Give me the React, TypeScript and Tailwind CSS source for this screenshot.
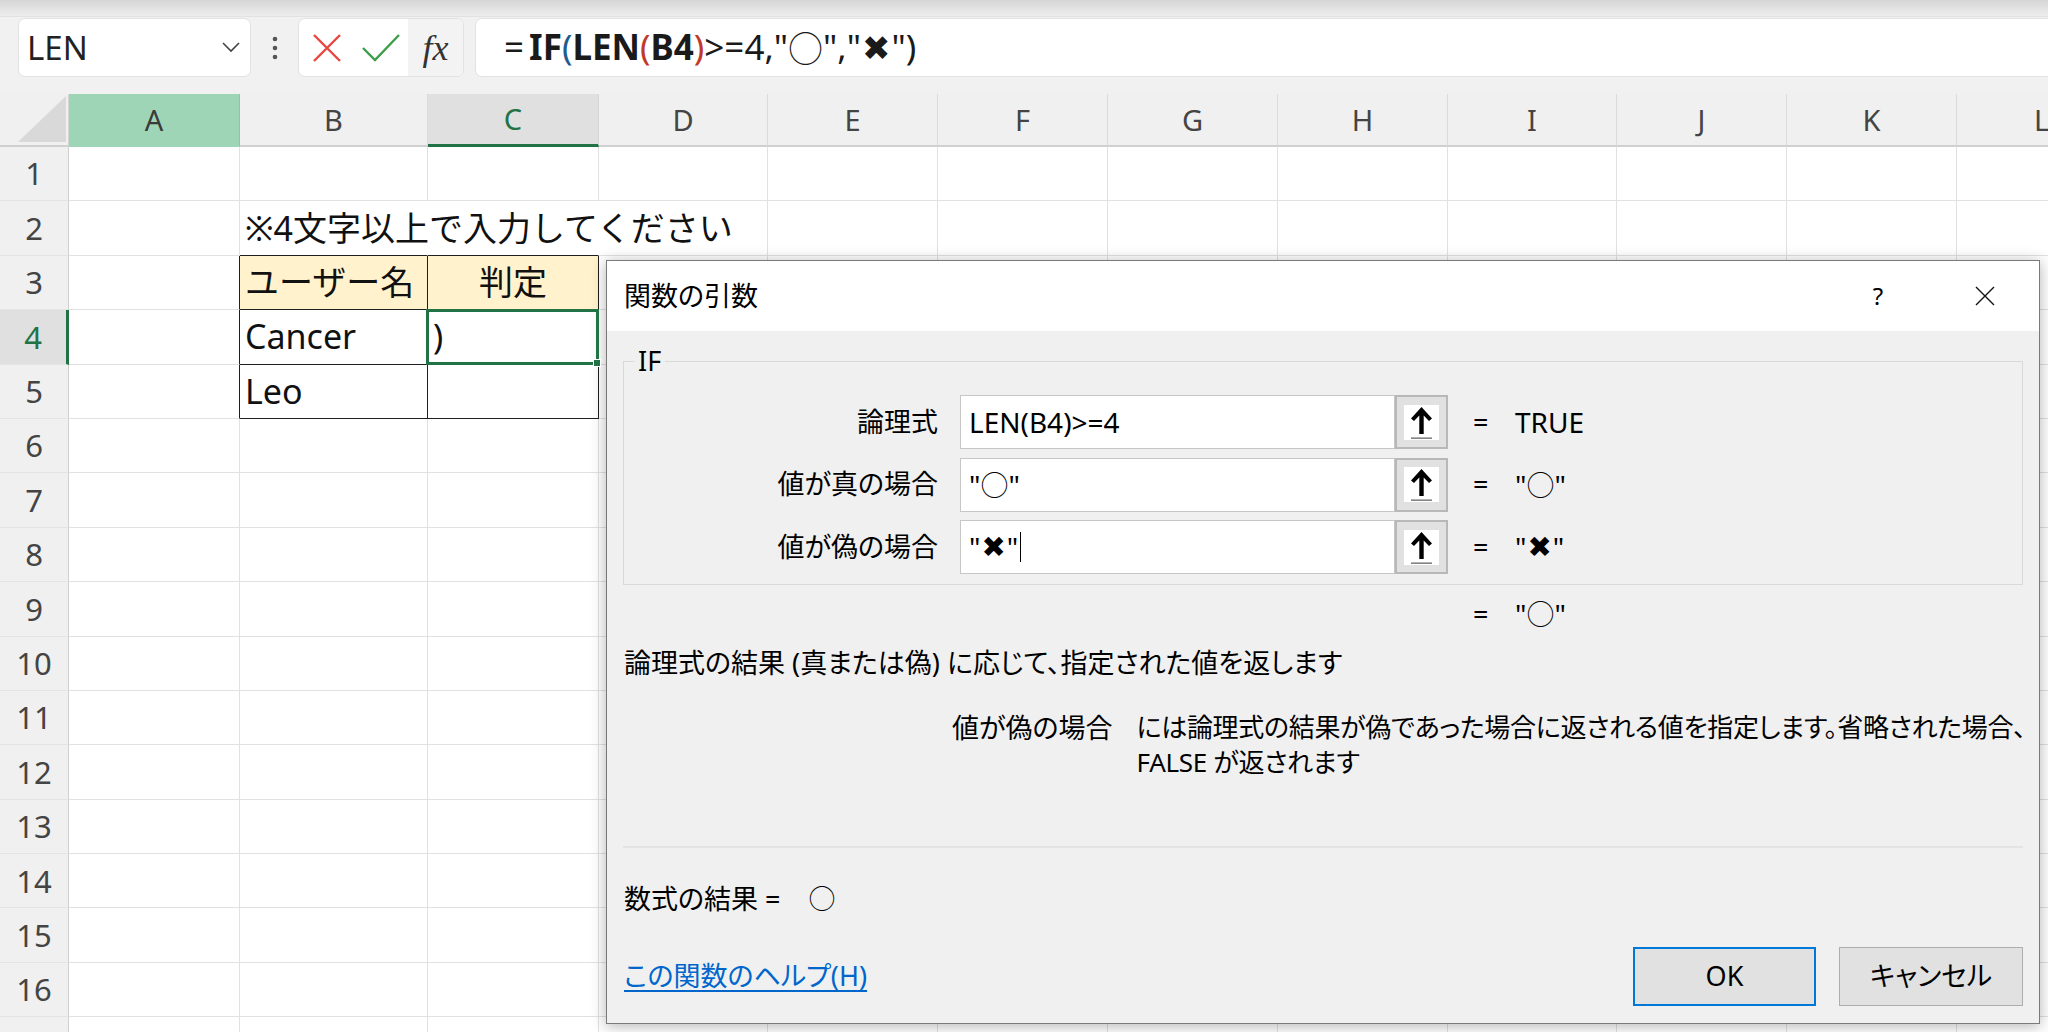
import React from "react";

const SANS = "font-['Noto_Sans','Noto_Sans_CJK_JP',sans-serif]";

const cols = [
  { id: "A", w: "w-[171px]" },
  { id: "B", w: "w-[188px]" },
  { id: "C", w: "w-[171px]" },
  { id: "D", w: "w-[169px]" },
  { id: "E", w: "w-[170px]" },
  { id: "F", w: "w-[170px]" },
  { id: "G", w: "w-[170px]" },
  { id: "H", w: "w-[170px]" },
  { id: "I", w: "w-[169px]" },
  { id: "J", w: "w-[170px]" },
  { id: "K", w: "w-[170px]" },
  { id: "L", w: "w-[170px]" },
];

const rows = Array.from({ length: 16 }, (_, i) => i + 1);

const values: Record<string, string> = {
  B2: "※4文字以上で入力してください",
  B3: "ユーザー名",
  C3: "判定",
  B4: "Cancer",
  C4: ")",
  B5: "Leo",
};

const inTable = (c: string, r: number) => (c === "B" || c === "C") && r >= 3 && r <= 5;

function Cell({ col, row }: { col: (typeof cols)[number]; row: number }) {
  const key = col.id + row;
  let right = "border-r-[#e1e1e1]";
  let bottom = "border-b-[#e1e1e1]";
  let bg = "";
  let align = "justify-start pl-[5px]";

  if (col.id === "A" && row >= 3 && row <= 5) right = "border-r-[#1f1f1f]";
  if (row === 2 && (col.id === "B" || col.id === "C")) {
    bottom = "border-b-[#1f1f1f]";
    right = "border-r-transparent";
  }
  if (inTable(col.id, row)) {
    right = "border-r-[#1f1f1f]";
    bottom = "border-b-[#1f1f1f]";
  }
  if (row === 3 && inTable(col.id, row)) bg = "bg-[#fff2cc]";
  if (key === "C3") align = "justify-center";

  return (
    <div
      className={`${col.w} shrink-0 h-full border-r border-b ${right} ${bottom} ${bg} relative flex items-center ${align} whitespace-nowrap`}
    >
      {values[key] && <span className="relative z-10">{values[key]}</span>}
      {key === "C4" && (
        <div className="absolute -left-[2px] -top-[1px] -right-[1px] -bottom-[1px] border-[3px] border-[#217346] z-20">
          <div className="absolute -right-[5px] -bottom-[5px] w-[8px] h-[8px] bg-[#217346] border border-white" />
        </div>
      )}
    </div>
  );
}

function Sheet() {
  return (
    <div className={`${SANS} text-[34px] text-[#111]`}>
      {/* column headers */}
      <div className="flex h-[53px] bg-[#f0f0f0]">
        <div className="w-[69px] shrink-0 border-r border-r-[#d4d4d4] border-b-2 border-b-[#d0d0d0] flex items-end justify-end pr-[2px] pb-[3px]">
          <svg width="48" height="46" viewBox="0 0 48 46">
            <polygon points="48,0 48,46 0,46" fill="#d9d9d9" />
          </svg>
        </div>
        {cols.map((c) => (
          <div
            key={c.id}
            className={`${c.w} shrink-0 flex items-center justify-center text-[29px] border-r ${
              c.id === "A"
                ? "bg-[#9fd5b7] border-r-[#8fc5a7] border-b-2 border-b-[#9fd5b7] text-[#3a3a3a]"
                : c.id === "C"
                ? "bg-[#e0e0e0] border-r-[#d6d6d6] border-b-[3px] border-b-[#217346] text-[#217346]"
                : "border-r-[#dadada] border-b-2 border-b-[#d0d0d0] text-[#444]"
            }`}
          >
            {c.id}
          </div>
        ))}
      </div>

      {/* rows */}
      {rows.map((r) => (
        <div key={r} className="flex h-[54.4px]">
          <div
            className={`w-[69px] shrink-0 flex items-center justify-center text-[31px] border-b border-b-[#e4e4e4] ${
              r === 4
                ? "bg-[#e0e0e0] text-[#217346] border-r-[3px] border-r-[#217346]"
                : "bg-[#f0f0f0] text-[#444] border-r border-r-[#cfcfcf]"
            }`}
          >
            {r}
          </div>
          {cols.map((c) => (
            <Cell key={c.id} col={c} row={r} />
          ))}
        </div>
      ))}
      {/* partially visible next row */}
      <div className="flex h-[30px]">
        <div className="w-[69px] shrink-0 bg-[#f0f0f0] border-r border-r-[#cfcfcf]" />
        {cols.map((c) => (
          <div key={c.id} className={`${c.w} shrink-0 h-full border-r border-r-[#e1e1e1]`} />
        ))}
      </div>
    </div>
  );
}

function FormulaBar() {
  return (
    <>
      <div className="h-[17px] bg-gradient-to-b from-[#d6d6d6] to-[#ededed] border-b border-[#e2e2e2]" />
      <div className={`h-[77px] bg-[#f1f1f1] flex items-start pt-[1px] pl-[18px] ${SANS}`}>
        <div className="w-[233px] h-[59px] shrink-0 bg-white border border-[#e2e2e2] rounded-[7px] flex items-center pl-[8px] pr-[10px] text-[33px] text-[#222]">
          <span>LEN</span>
          <svg className="ml-auto" width="18" height="11" viewBox="0 0 18 11">
            <polyline points="1,1 9,9 17,1" fill="none" stroke="#444" strokeWidth="1.6" />
          </svg>
        </div>
        <div className="w-[47px] h-[59px] shrink-0 flex items-center justify-center">
          <svg width="6" height="24" viewBox="0 0 6 24">
            <circle cx="3" cy="3" r="2.3" fill="#555" />
            <circle cx="3" cy="12" r="2.3" fill="#555" />
            <circle cx="3" cy="21" r="2.3" fill="#555" />
          </svg>
        </div>
        <div className="w-[166px] h-[59px] shrink-0 bg-white border border-[#e2e2e2] rounded-[7px] flex items-center overflow-hidden">
          <svg className="ml-[13px]" width="30" height="30" viewBox="0 0 30 30">
            <path d="M2 2 L28 28 M28 2 L2 28" stroke="#e8463e" strokeWidth="2.4" fill="none" />
          </svg>
          <svg className="ml-[20px]" width="38" height="28" viewBox="0 0 38 28">
            <polyline points="1,14 13,26 37,1" stroke="#3c9e4b" strokeWidth="2.4" fill="none" />
          </svg>
          <div className="ml-auto w-[55px] h-full bg-[#f3f3f3] flex items-center justify-center font-['Liberation_Serif',serif] italic text-[36px] text-[#333]">
            fx
          </div>
        </div>
        <div className="ml-[11px] flex-1 -mr-[10px] h-[59px] bg-white border border-[#e2e2e2] rounded-l-[7px] flex items-center pl-[28px] text-[35px] text-[#1a1a1a] whitespace-nowrap">
          <span>=</span>
          <span className="font-bold ml-[5px]">IF</span>
          <span className="text-[#1f5d8c]">(</span>
          <span className="font-bold">LEN</span>
          <span className="text-[#c0392b]">(</span>
          <span className="font-bold">B4</span>
          <span className="text-[#c0392b]">)</span>
          <span>&gt;=4,"</span>
          <span className="font-['Noto_Sans_CJK_JP',sans-serif] font-light">○</span>
          <span>","</span>
          <span className="font-['DejaVu_Sans',sans-serif] text-[34px] leading-none px-[1px]">✖</span>
          <span>"</span>
          <span className="text-[#1a1a1a]">)</span>
        </div>
      </div>
    </>
  );
}

function RefButton() {
  return (
    <div className="w-[53px] h-[54px] shrink-0 bg-[#e1e1e1] border-2 border-[#b8b8b8] flex items-center justify-center">
      <svg width="35" height="35" viewBox="0 0 35 35">
        <rect width="35" height="35" fill="#fff" />
        <path
          d="M17.5 2 L7 13.5 L10 16 L15.3 10.5 L15.3 29 L19.7 29 L19.7 10.5 L25 16 L28 13.5 Z"
          fill="#000"
        />
        <rect x="7" y="32.5" width="21" height="1.3" fill="#666" />
      </svg>
    </div>
  );
}

const args = [
  { label: "論理式", value: "LEN(B4)>=4", result: "TRUE" },
  { label: "値が真の場合", value: "\"○\"", result: "\"○\"" },
  { label: "値が偽の場合", value: "\"✖\"", result: "\"✖\"", caret: true },
];

function Quoted({ text }: { text: string }) {
  if (text.includes("✖")) {
    return (
      <span className="inline-flex items-center">
        "<span className="font-['DejaVu_Sans',sans-serif] text-[29px] leading-none px-[1px]">✖</span>"
      </span>
    );
  }
  if (text.includes("○")) {
    return (
      <span>
        "<span className="font-light">○</span>"
      </span>
    );
  }
  return <span>{text}</span>;
}

function Dialog() {
  return (
    <div
      className={`absolute left-[606px] top-[260px] w-[1434px] h-[764px] bg-[#f0f0f0] border border-[#7a7a7a] shadow-[0_2px_14px_rgba(0,0,0,0.3)] flex flex-col ${SANS} [font-feature-settings:'palt'] text-[27px] text-black`}
    >
      {/* title bar */}
      <div className="h-[70px] shrink-0 bg-white flex items-center pl-[17px]">
        <span className="text-[27px]">関数の引数</span>
        <div className="ml-auto mr-[4px] flex h-full gap-[7px]">
          <div className="w-[100px] flex items-center justify-center text-[24px]">?</div>
          <div className="w-[100px] flex items-center justify-center">
            <svg width="20" height="20" viewBox="0 0 20 20">
              <path d="M1 1 L19 19 M19 1 L1 19" stroke="#111" strokeWidth="1.4" fill="none" />
            </svg>
          </div>
        </div>
      </div>

      <div className="px-[16px] flex flex-col">
        {/* group box */}
        <div className="mt-[30px] h-[224px] border border-[#d9d9d9] relative">
          <span className="absolute left-[10px] -top-[17px] px-[4px] bg-[#f0f0f0] leading-[32px]">IF</span>
          <div className="pt-[33px] flex flex-col gap-[8.5px]">
            {args.map((a) => (
              <div key={a.label} className="flex items-center h-[54px]">
                <div className="w-[314px] shrink-0 text-right">{a.label}</div>
                <div className="ml-[22px] w-[435px] h-[54px] shrink-0 bg-white border border-[#c6c6c6] flex items-center pl-[8px] text-[28px]">
                  <Quoted text={a.value} />
                  {a.caret && <span className="w-[1px] h-[30px] bg-black ml-[2px]" />}
                </div>
                <RefButton />
                <span className="ml-[25px] w-[17px]">=</span>
                <span className="ml-[25px] text-[28px]">
                  <Quoted text={a.result} />
                </span>
              </div>
            ))}
          </div>
        </div>

        {/* overall result */}
        <div className="mt-[8px] h-[42px] flex items-center pl-[850px]">
          <span className="w-[17px]">=</span>
          <span className="ml-[25px] text-[28px]">
            <Quoted text={"\"○\""} />
          </span>
        </div>

        {/* description */}
        <div className="mt-[8px] h-[40px] flex items-center pl-[1px] whitespace-nowrap">
          論理式の結果 (真または偽) に応じて、指定された値を返します
        </div>

        {/* argument description */}
        <div className="mt-[27px] flex pl-[329px] leading-[35px] whitespace-nowrap">
          <span>値が偽の場合</span>
          <span className="ml-[24px] text-[26px] tracking-[-0.3px]">
            には論理式の結果が偽であった場合に返される値を指定します。省略された場合、
            <br />
            FALSE が返されます
          </span>
        </div>

        <div className="mt-[66px] h-[2px] bg-[#e3e3e3]" />

        {/* formula result */}
        <div className="mt-[31px] h-[40px] flex items-center pl-[1px]">
          <span>数式の結果 =</span>
          <span className="ml-[28px] font-light">○</span>
        </div>

        {/* help + buttons */}
        <div className="mt-[28px] h-[59px] flex items-center">
          <span className="pl-[1px] text-[#0066cc] underline underline-offset-[4px]">この関数のヘルプ(H)</span>
          <div className="ml-auto flex gap-[23px]">
            <div className="w-[183px] h-[59px] bg-[#e1e1e1] border-2 border-[#0078d7] flex items-center justify-center">
              OK
            </div>
            <div className="w-[184px] h-[59px] bg-[#e1e1e1] border border-[#adadad] flex items-center justify-center">
              キャンセル
            </div>
          </div>
        </div>
      </div>
    </div>
  );
}

export default function App() {
  return (
    <div className="relative w-[2048px] h-[1032px] overflow-hidden bg-white">
      <FormulaBar />
      <Sheet />
      <Dialog />
    </div>
  );
}
